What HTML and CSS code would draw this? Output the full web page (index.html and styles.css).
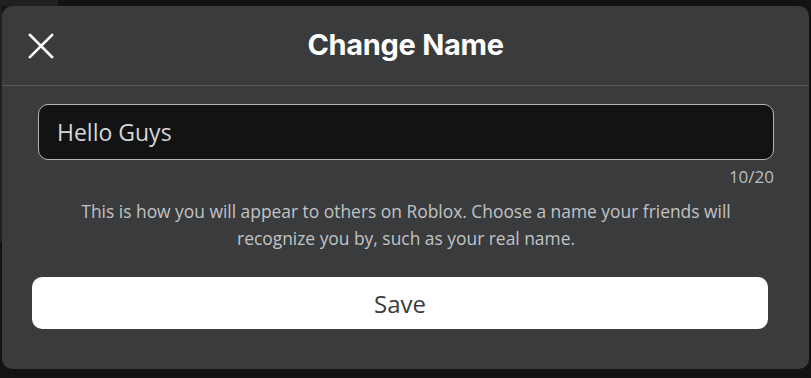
FILE: index.html
```html
<!DOCTYPE html>
<html lang="en">
<head>
    <meta charset="UTF-8">
    <meta name="viewport" content="width=device-width, initial-scale=1.0">
    <title>Change Name</title>
    <link rel="stylesheet" href="styles.css">
</head>
<body>
    <div class="modal">
        <div class="modal-header">
            <button class="close-btn" aria-label="Close">
                <svg width="26" height="26" viewBox="0 0 26 26"><path d="M2 2 L24 24 M24 2 L2 24" stroke="#fff" stroke-width="2.6" stroke-linecap="square" fill="none"/></svg>
            </button>
            <h1 class="title">Change Name</h1>
            <span></span>
        </div>
        <div class="modal-body">
            <input class="name-input" type="text" value="Hello Guys">
            <div class="counter">10/20</div>
            <p class="hint">This is how you will appear to others on Roblox. Choose a name your friends will recognize you by, such as your real name.</p>
            <button class="save-btn">Save</button>
        </div>
    </div>
</body>
</html>
```

FILE: styles.css
```css
* { box-sizing: border-box; margin: 0; padding: 0; }
body {
    height: 378px; overflow: hidden; padding: 6px 2px 0 2px;
    font-family: 'Open Sans', 'Liberation Sans', sans-serif;
    background:
        linear-gradient(#1f2022, #1f2022) 0 0 / 58px 6px no-repeat,
        linear-gradient(#1f2022, #1f2022) 0 0 / 2px 242px no-repeat,
        #121315;
}

.modal { width: 807px; height: 363px; background: #393b3d; border-radius: 10px; display: flex; flex-direction: column; }

.modal-header { height: 80px; border-bottom: 1px solid #58595b; display: grid; grid-template-columns: 1fr auto 1fr; align-items: center; padding: 0 26px; }
.close-btn { background: none; border: none; width: 26px; height: 26px; display: flex; cursor: pointer; }
.title { color: #fff; font-family: 'Inter', 'Open Sans', sans-serif; font-weight: 700; font-size: 29px; letter-spacing: -0.3px; margin-top: -2px; }

.modal-body { display: flex; flex-direction: column; padding: 18px 35px 0 36px; }
.name-input { height: 56px; width: 100%; background: #121314; border: 1px solid #b3b4b6; border-radius: 10px; color: #d6d6d6; font-family: inherit; font-size: 23px; padding: 0 18px; outline: none; }
.counter { text-align: right; color: #bdbec0; font-size: 17px; margin-top: 7px; line-height: 20px; }
.hint { text-align: center; color: #c2c3c5; font-size: 17.4px; line-height: 27px; margin-top: 11px; padding: 0 40px; }
.save-btn { margin: 25px 6px 0 -6px; height: 52px; background: #fff; border: none; border-radius: 10px; color: #393b3d; font-family: inherit; font-size: 24px; cursor: pointer; }
```
